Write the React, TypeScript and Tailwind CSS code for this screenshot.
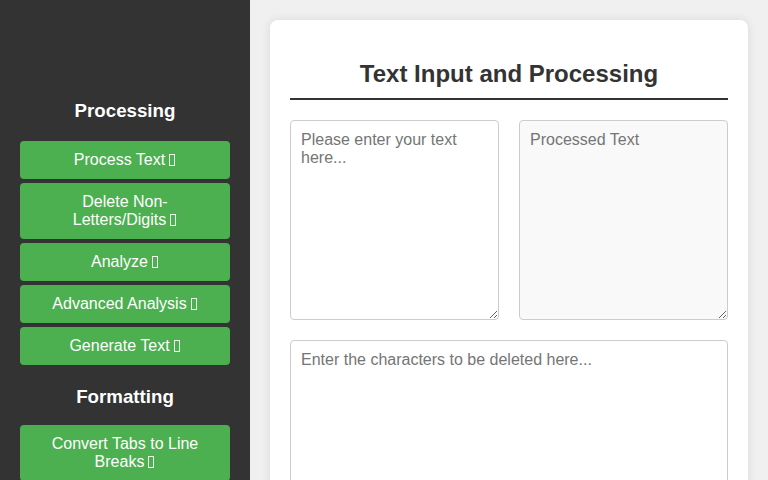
const processing = [
  "Process Text",
  "Delete Non-Letters/Digits",
  "Analyze",
  "Advanced Analysis",
  "Generate Text",
];

const formatting = ["Convert Tabs to Line Breaks"];

// the emoji in the original app has no font, so it shows as an empty box
const Tofu = () => (
  <span className="ml-1 mr-px inline-block h-[12px] w-[6px] border border-white/90 align-[-1px]" />
);

const SideButton = ({ label }: { label: string }) => (
  <button className="block w-full mb-1 rounded bg-[#4caf50] px-5 py-[10px] text-base leading-[18px] text-white text-center">
    {label}
    <Tofu />
  </button>
);

export default function App() {
  return (
    <div className="flex h-[480px] w-[768px] overflow-hidden bg-[#f0f0f0] font-['Liberation_Sans'] text-base">
      <aside className="w-[250px] shrink-0 bg-[#333333] px-5 pt-[100px] text-white">
        <h3 className="mb-[19px] text-center text-[18.72px] font-bold leading-[22px]">Processing</h3>
        {processing.map((l) => (
          <SideButton key={l} label={l} />
        ))}
        <h3 className="mt-[21px] mb-[17px] text-center text-[18.72px] font-bold leading-[22px]">Formatting</h3>
        {formatting.map((l) => (
          <SideButton key={l} label={l} />
        ))}
      </aside>
      <main className="min-w-0 flex-1 p-5">
        <div className="h-[600px] rounded-lg bg-white p-5 shadow-[0_0_10px_rgba(0,0,0,0.1)]">
          <h2 className="mt-5 mb-5 border-b-2 border-[#333333] pb-[10px] text-center text-2xl font-bold leading-[28px] text-[#333333]">
            Text Input and Processing
          </h2>
          <div className="flex gap-5">
            <textarea
              className="h-[200px] w-0 min-w-0 flex-1 rounded border border-[#cccccc] p-[10px] text-base leading-[18px] text-[#333] placeholder:text-[#757575]"
              placeholder="Please enter your text here..."
            />
            <textarea
              className="h-[200px] w-0 min-w-0 flex-1 rounded border border-[#cccccc] bg-[#f9f9f9] p-[10px] text-base leading-[18px] text-[#333] placeholder:text-[#757575]"
              placeholder="Processed Text"
              readOnly
            />
          </div>
          <textarea
            className="mt-5 block h-[200px] w-full rounded border border-[#cccccc] p-[10px] text-base leading-[18px] text-[#333] placeholder:text-[#757575]"
            placeholder="Enter the characters to be deleted here..."
          />
        </div>
      </main>
    </div>
  );
}
